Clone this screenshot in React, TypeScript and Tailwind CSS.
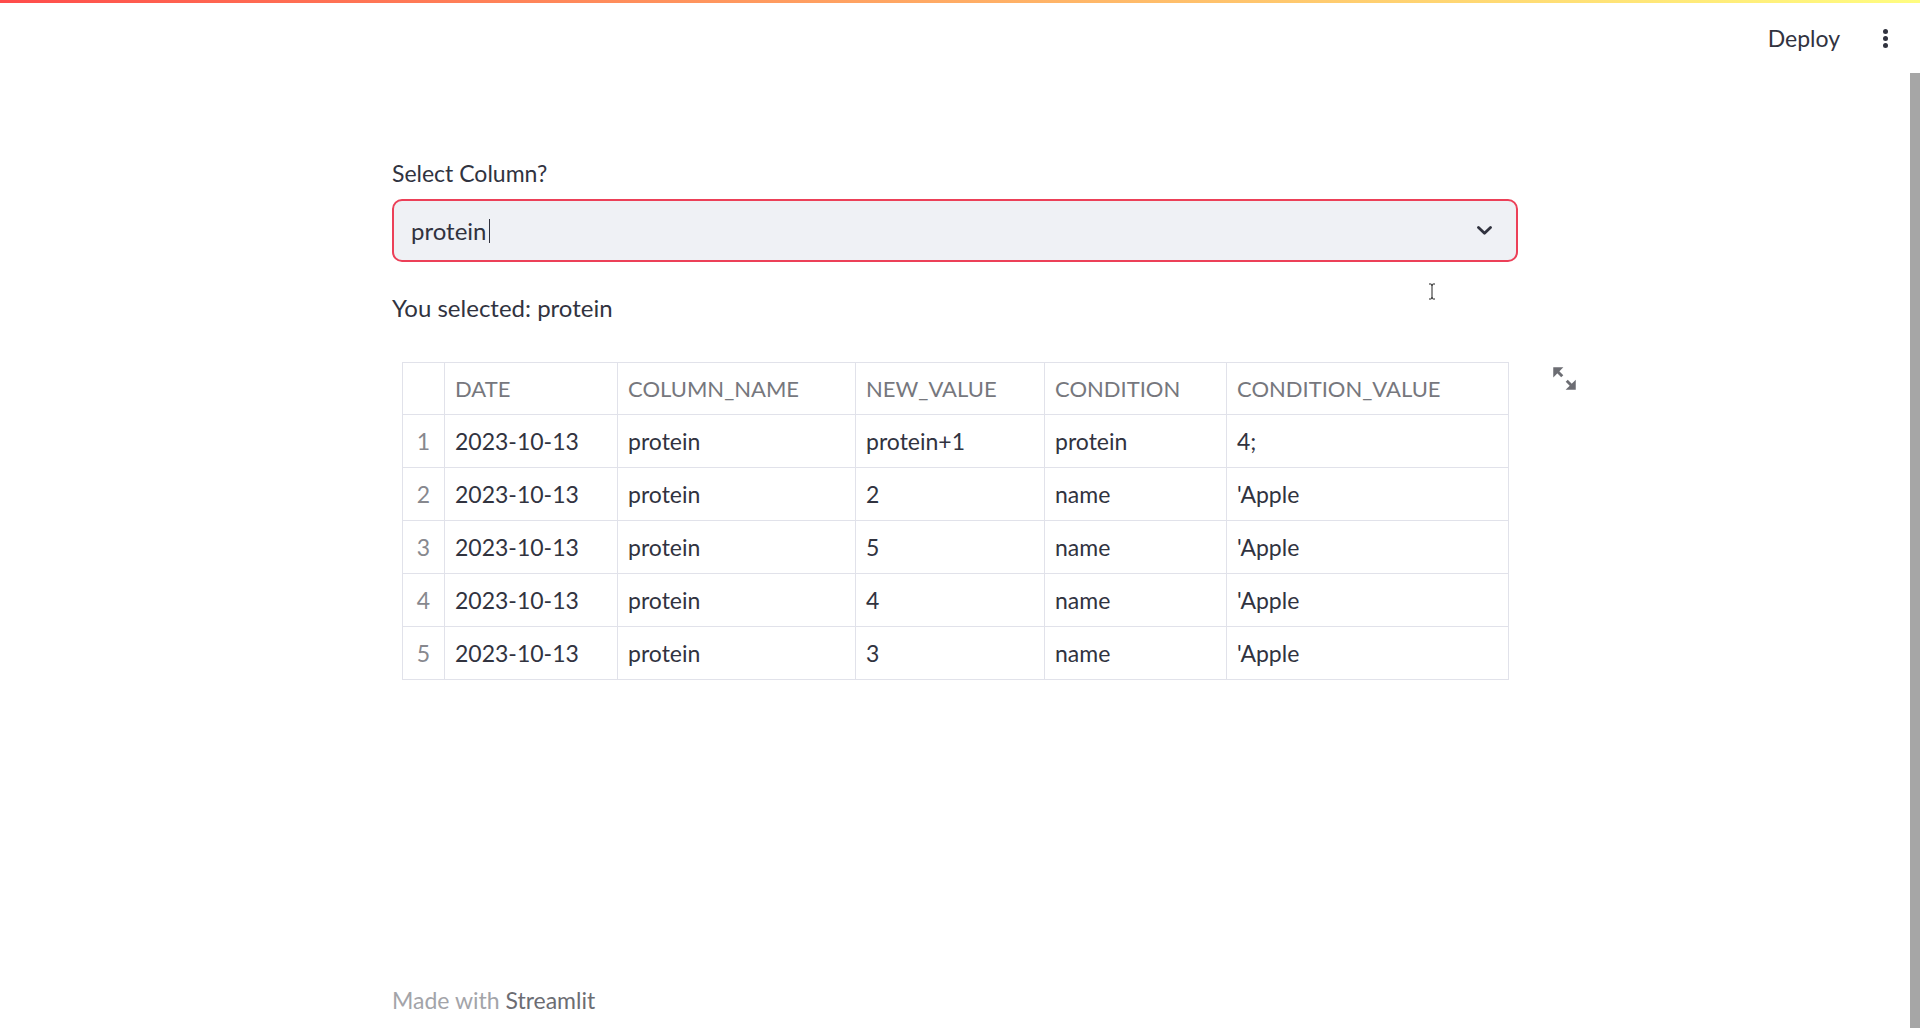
import React from "react";

const cols = ["DATE", "COLUMN_NAME", "NEW_VALUE", "CONDITION", "CONDITION_VALUE"];
const rows = [
  ["2023-10-13", "protein", "protein+1", "protein", "4;"],
  ["2023-10-13", "protein", "2", "name", "'Apple"],
  ["2023-10-13", "protein", "5", "name", "'Apple"],
  ["2023-10-13", "protein", "4", "name", "'Apple"],
  ["2023-10-13", "protein", "3", "name", "'Apple"],
];

const font = { fontFamily: "Lato, 'Open Sans', sans-serif" };

function ExpandIcon() {
  return (
    <svg width="27" height="27" viewBox="0 0 24 24" fill="#6c6d73">
      <polygon points="2,2 11,2 2,11" />
      <line x1="4.5" y1="4.5" x2="10" y2="10" stroke="#6c6d73" strokeWidth="2.6" />
      <polygon points="22,22 13,22 22,13" />
      <line x1="19.5" y1="19.5" x2="14" y2="14" stroke="#6c6d73" strokeWidth="2.6" />
    </svg>
  );
}

export default function App() {
  return (
    <div className="w-full h-[1028px] bg-white flex flex-col overflow-hidden relative text-[#31333f]" style={font}>
      <div className="h-[3px] w-full bg-gradient-to-r from-[#ff4b4b] to-[#fffd80]" />
      <div className="flex-1 flex">
        <div className="flex-1 flex flex-col">
          <div className="h-[70px] flex items-center justify-end pr-[22px]">
            <span className="text-[23px] leading-[32px] mr-[42px]">Deploy</span>
            <div className="flex flex-col gap-[2px] items-center w-[6px]">
              <span className="w-[5px] h-[5px] rounded-full bg-[#31333f]" />
              <span className="w-[5px] h-[5px] rounded-full bg-[#31333f]" />
              <span className="w-[5px] h-[5px] rounded-full bg-[#31333f]" />
            </div>
          </div>
          <div className="w-[1126px] mx-auto flex flex-col">
            <div className="mt-[84px] text-[23px] leading-[32px]">Select Column?</div>
            <div className="mt-[10px] h-[63px] rounded-[10px] border-2 border-[#ec4058] bg-[#eff1f5] flex items-center pl-[17px] pr-[24px]">
              <span className="text-[24px] leading-[32px]">protein</span>
              <span className="ml-[3px] w-px h-[24px] bg-[#31333f]" />
              <div className="flex-1" />
              <svg width="15" height="9" viewBox="0 0 15 9" fill="none">
                <path d="M1.5 1.5 L7.5 7.2 L13.5 1.5" stroke="#31333f" strokeWidth="2.8" strokeLinecap="round" strokeLinejoin="round" />
              </svg>
            </div>
            <div className="mt-[30px] text-[24px] leading-[32px]">You selected: protein</div>
            <div className="mt-[38px] flex items-start">
              <div className="ml-[10px] border-l border-t border-[#e1e2ea] grid grid-cols-[42px_173px_238px_189px_182px_282px]">
                <div className="h-[52px] border-r border-b border-[#e1e2ea]" />
                {cols.map((c) => (
                  <div key={c} className="h-[52px] border-r border-b border-[#e1e2ea] flex items-center pl-[10px] text-[22px] text-[#76777d]">
                    {c}
                  </div>
                ))}
                {rows.map((r, i) => (
                  <React.Fragment key={i}>
                    <div className="h-[53px] border-r border-b border-[#e1e2ea] flex items-center justify-center text-[23px] text-[#87888e]">
                      {i + 1}
                    </div>
                    {r.map((v, j) => (
                      <div key={j} className="h-[53px] border-r border-b border-[#e1e2ea] flex items-center pl-[10px] text-[23px] text-[#31333f]">
                        {v}
                      </div>
                    ))}
                  </React.Fragment>
                ))}
              </div>
              <div className="ml-[42px] mt-[3px]">
                <ExpandIcon />
              </div>
            </div>
          </div>
          <div className="flex-1" />
          <div className="w-[1126px] mx-auto pb-[12px] text-[23px] leading-[32px]">
            <span className="text-[#a3a4a9]">Made with </span>
            <span className="text-[#6c6d73]">Streamlit</span>
          </div>
        </div>
        <div className="w-[10px] pt-[70px] flex flex-col">
          <div className="flex-1 bg-[#a6a6a6]" />
        </div>
      </div>
      <svg className="absolute left-[1428px] top-[283px]" width="8" height="17" viewBox="0 0 8 17" fill="none">
        <path d="M1 1 H3 Q4 1 4 3 V14 Q4 16 3 16 H1 M7 1 H5 Q4 1 4 3 M4 14 Q4 16 5 16 H7" stroke="#222" strokeWidth="1" />
      </svg>
    </div>
  );
}
